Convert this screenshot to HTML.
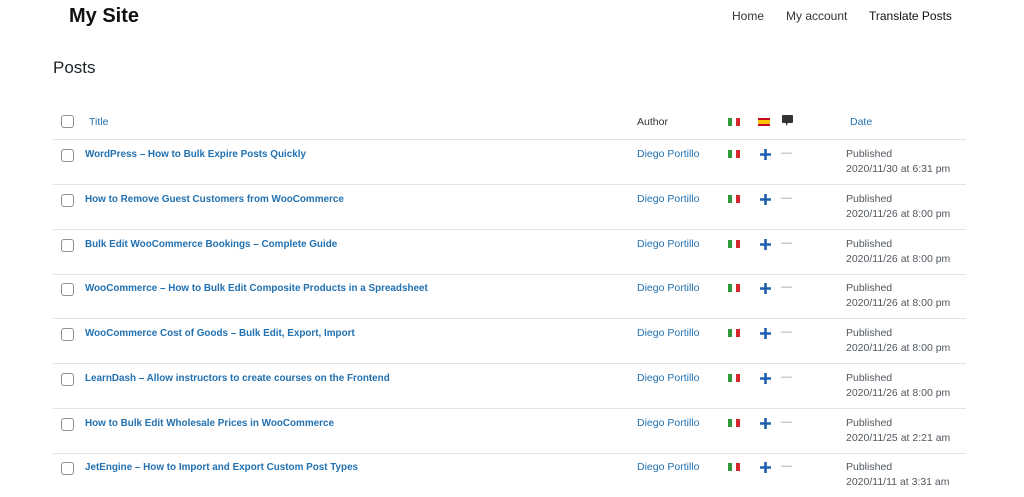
<!DOCTYPE html>
<html><head><meta charset="utf-8"><style>
body{margin:0;width:1024px;height:497px;overflow:hidden;background:#fff;font-family:"Liberation Sans",sans-serif;position:relative}
.a{position:absolute;white-space:nowrap}
.cb{position:absolute;width:11px;height:11px;border:1px solid #8c8f94;border-radius:3px;left:61px;background:#fff}
.t{color:#2271b1;font-size:9.9px;left:85px;font-weight:bold}
.au{color:#2271b1;font-size:10.5px;left:637px}
.it{position:absolute;left:728px;width:12px;height:8px;background:linear-gradient(90deg,#2e9a3a 33%,#fff 33% 66%,#d4282e 66%)}
.pl{position:absolute;left:760px}
.dash{color:#999;font-size:11px;left:781px}
.d{color:#50575e;font-size:10.5px;left:846px;line-height:15px}
.ln{position:absolute;left:53px;width:913px;height:1px;background:#e4e4e4}
</style></head><body>
<div class="a" style="left:69px;top:5px;font-size:20px;font-weight:bold;color:#111">My Site</div>
<div class="a" style="left:732px;top:9px;font-size:12px;color:#333">Home</div>
<div class="a" style="left:786px;top:9px;font-size:12px;color:#333">My account</div>
<div class="a" style="left:869px;top:9px;font-size:12px;color:#111">Translate Posts</div>
<div class="a" style="left:53px;top:58px;font-size:17px;color:#1d2327">Posts</div>
<div class="cb" style="top:115px"></div>
<div class="a" style="left:89px;top:116px;font-size:10.5px;color:#2271b1">Title</div>
<div class="a" style="left:637px;top:116px;font-size:10.5px;color:#333">Author</div>
<div class="it" style="top:118px"></div>
<div class="a" style="left:758px;top:118px;width:12px;height:8px;background:linear-gradient(#c60b1e 25%,#ffc400 25% 75%,#c60b1e 75%)"></div>
<svg class="a" style="left:782px;top:115px" width="11" height="12" viewBox="0 0 11 12"><path d="M1 0h9a1 1 0 0 1 1 1v6a1 1 0 0 1-1 1H6l-2 3V8H1a1 1 0 0 1-1-1V1a1 1 0 0 1 1-1z" fill="#333"/></svg>
<div class="a" style="left:850px;top:116px;font-size:10.5px;color:#2271b1">Date</div>
<div class="ln" style="top:139px"></div>
<div id="rows"></div>
<script>
var R=[["WordPress – How to Bulk Expire Posts Quickly","2020/11/30 at 6:31 pm"],
["How to Remove Guest Customers from WooCommerce","2020/11/26 at 8:00 pm"],
["Bulk Edit WooCommerce Bookings – Complete Guide","2020/11/26 at 8:00 pm"],
["WooCommerce – How to Bulk Edit Composite Products in a Spreadsheet","2020/11/26 at 8:00 pm"],
["WooCommerce Cost of Goods – Bulk Edit, Export, Import","2020/11/26 at 8:00 pm"],
["LearnDash – Allow instructors to create courses on the Frontend","2020/11/26 at 8:00 pm"],
["How to Bulk Edit Wholesale Prices in WooCommerce","2020/11/25 at 2:21 am"],
["JetEngine – How to Import and Export Custom Post Types","2020/11/11 at 3:31 am"]];
var h="";R.forEach(function(r,i){var y=Math.round(148+44.75*i);
h+='<div class="cb" style="top:'+(y+1)+'px"></div><div class="a t" style="top:'+(y+1)+'px">'+r[0]+'</div><div class="a au" style="top:'+y+'px">Diego Portillo</div><div class="it" style="top:'+(y+2)+'px"></div><svg class="pl" style="top:'+(y+1)+'px" width="11" height="11" viewBox="0 0 11 11"><path d="M4.2 0h2.6v4.2H11v2.6H6.8V11H4.2V6.8H0V4.2h4.2z" fill="#1e5fb0"/></svg><div class="a dash" style="top:'+(y-1)+'px">—</div><div class="a d" style="top:'+(y-1)+'px">Published<br>'+r[1]+'</div>';
if(i<7)h+='<div class="ln" style="top:'+Math.round(184+44.75*i)+'px"></div>';});
document.getElementById("rows").innerHTML=h;
</script>
</body></html>
